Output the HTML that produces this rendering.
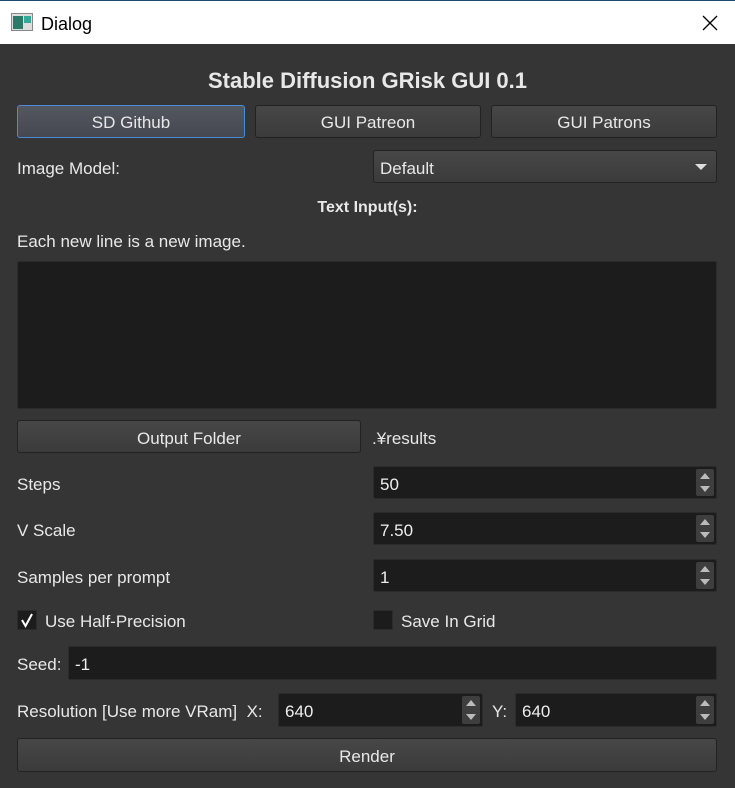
<!DOCTYPE html><html><head><style>
body{margin:0;width:735px;height:788px;overflow:hidden;background:#353535;font-family:"Liberation Sans",sans-serif;font-size:17px;color:#e8e8e8;position:relative}
.a{position:absolute}
.tb{left:0;top:0;width:735px;height:44px;background:#fff;color:#000;border-top:1px solid #1e4a6e;box-sizing:border-box}
.btn{position:absolute;height:33px;box-sizing:border-box;border:1px solid #222;border-radius:3px;background:linear-gradient(#474747,#3b3b3b);text-align:center;line-height:33px;color:#e8e8e8}
.inp{position:absolute;box-sizing:border-box;background:#1c1c1c;border:1px solid #2b2b2b;border-radius:2px;padding-left:6px;line-height:35px;color:#eee}
.sp{position:absolute;right:2px;top:2px;width:18px;bottom:2px;background:#3e3e3e;border-radius:2px}
.sp:before{content:"";position:absolute;left:4px;top:4px;border:5px solid transparent;border-bottom:6px solid #bbb;border-top:0}
.sp:after{content:"";position:absolute;left:4px;bottom:4px;border:5px solid transparent;border-top:6px solid #bbb;border-bottom:0}
.lbl{position:absolute;line-height:20px}
</style></head><body>
<div class="a tb">
<svg class="a" style="left:11px;top:12px" width="22" height="18"><rect x="0.5" y="0.5" width="21" height="17" fill="#ddd" stroke="#888"/><rect x="2" y="3" width="10" height="13" fill="#2a7a6a"/><rect x="13" y="3" width="7" height="7" fill="#3a9"/></svg>
<div class="a" style="left:41px;top:13px;font-size:18px">Dialog</div>
<svg class="a" style="left:702px;top:14px" width="16" height="16"><path d="M1 1L15 15M15 1L1 15" stroke="#000" stroke-width="1.3"/></svg>
</div>
<div class="a" style="left:0;width:735px;top:68px;text-align:center;font-weight:bold;font-size:22px">Stable Diffusion GRisk GUI 0.1</div>
<div class="btn" style="left:17px;top:105px;width:228px;border-color:#4a8ad8;background:linear-gradient(#535760,#454850)">SD Github</div>
<div class="btn" style="left:255px;top:105px;width:226px">GUI Patreon</div>
<div class="btn" style="left:491px;top:105px;width:226px">GUI Patrons</div>
<div class="lbl" style="left:17px;top:159px">Image Model:</div>
<div class="btn" style="left:373px;top:150px;width:344px;text-align:left;padding-left:6px;line-height:35px">Default<span class="a" style="right:9px;top:13px;border:6px solid transparent;border-top:6px solid #ddd"></span></div>
<div class="lbl" style="left:0;width:735px;text-align:center;top:198px;font-weight:bold;font-size:16px">Text Input(s):</div>
<div class="lbl" style="left:17px;top:232px">Each new line is a new image.</div>
<div class="inp" style="left:17px;top:261px;width:700px;height:148px"></div>
<div class="btn" style="left:17px;top:420px;width:344px;line-height:35px">Output Folder</div>
<div class="lbl" style="left:372px;top:429px">.¥results</div>
<div class="lbl" style="left:17px;top:475px">Steps</div>
<div class="inp" style="left:373px;top:466px;width:344px;height:33px">50<div class="sp"></div></div>
<div class="lbl" style="left:17px;top:521px">V Scale</div>
<div class="inp" style="left:373px;top:512px;width:344px;height:33px">7.50<div class="sp"></div></div>
<div class="lbl" style="left:17px;top:568px">Samples per prompt</div>
<div class="inp" style="left:373px;top:559px;width:344px;height:33px">1<div class="sp"></div></div>
<div class="a" style="left:17px;top:610px;width:20px;height:20px;background:#1c1c1c;border:1px solid #2b2b2b;box-sizing:border-box"></div>
<svg class="a" style="left:19px;top:612px" width="16" height="16"><path d="M3 8L6.5 14L13 2" stroke="#fff" stroke-width="2" fill="none"/></svg>
<div class="lbl" style="left:45px;top:612px">Use Half-Precision</div>
<div class="a" style="left:373px;top:610px;width:20px;height:20px;background:#1c1c1c;border:1px solid #2b2b2b;box-sizing:border-box"></div>
<div class="lbl" style="left:401px;top:612px">Save In Grid</div>
<div class="lbl" style="left:17px;top:655px">Seed:</div>
<div class="inp" style="left:68px;top:646px;width:649px;height:34px">-1</div>
<div class="lbl" style="left:17px;top:702px">Resolution [Use more VRam]&nbsp; X:</div>
<div class="inp" style="left:278px;top:693px;width:205px;height:34px">640<div class="sp"></div></div>
<div class="lbl" style="left:492px;top:702px">Y:</div>
<div class="inp" style="left:515px;top:693px;width:202px;height:34px">640<div class="sp"></div></div>
<div class="btn" style="left:17px;top:738px;width:700px;height:34px;line-height:35px">Render</div>
</body></html>
